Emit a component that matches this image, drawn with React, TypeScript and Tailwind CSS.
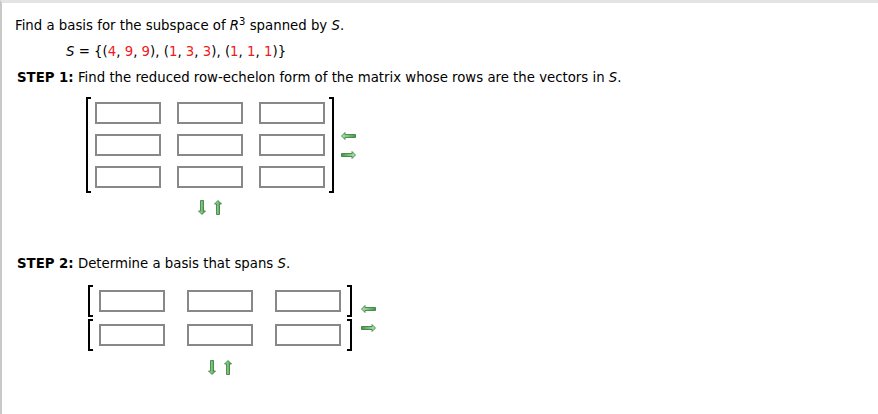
import React from "react";

function ArrowH({ dir }: { dir: "left" | "right" }) {
  const id = `gh-${dir}`;
  return (
    <svg width="15" height="8" viewBox="0 0 15 8" className="block">
      <defs>
        <linearGradient id={id} x1={dir === "left" ? "0" : "1"} y1="0" x2={dir === "left" ? "1" : "0"} y2="0">
          <stop offset="0" stopColor="#b4e2b0" />
          <stop offset="1" stopColor="#3f9a45" />
        </linearGradient>
      </defs>
      <polygon
        points={dir === "left" ? "0.5,4 4,0.5 4,2.5 14.5,2.5 14.5,5.5 4,5.5 4,7.5" : "14.5,4 11,0.5 11,2.5 0.5,2.5 0.5,5.5 11,5.5 11,7.5"}
        fill={`url(#${id})`}
        stroke="#2f7a34"
        strokeWidth="0.8"
      />
    </svg>
  );
}

function ArrowV({ dir }: { dir: "up" | "down" }) {
  const id = `gv-${dir}`;
  return (
    <svg width="8" height="15" viewBox="0 0 8 15" className="block">
      <defs>
        <linearGradient id={id} x1="0" y1="0" x2="1" y2="0">
          <stop offset="0" stopColor="#b4e2b0" />
          <stop offset="1" stopColor="#3f9a45" />
        </linearGradient>
      </defs>
      <polygon
        points={dir === "down" ? "4,14.5 0.5,11 2.5,11 2.5,0.5 5.5,0.5 5.5,11 7.5,11" : "4,0.5 0.5,4 2.5,4 2.5,14.5 5.5,14.5 5.5,4 7.5,4"}
        fill={`url(#${id})`}
        stroke="#2f7a34"
        strokeWidth="0.8"
      />
    </svg>
  );
}

function Box() {
  return <input type="text" className="block w-[66px] h-[22px] border-2 border-[#888888] bg-white outline-none" />;
}

function SideArrows() {
  return (
    <div className="flex flex-col gap-[11px]">
      <ArrowH dir="left" />
      <ArrowH dir="right" />
    </div>
  );
}

function BottomArrows() {
  return (
    <div className="flex gap-[8px]">
      <ArrowV dir="down" />
      <ArrowV dir="up" />
    </div>
  );
}

const red = "text-[#f01818]";

export default function App() {
  return (
    <div
      className="min-h-[414px] bg-white border-t-[3px] border-t-[#e4e4e4] border-l-2 border-l-[#c8c8c8] pl-[13px] pt-[15px] text-[13.3px] leading-[16px] text-black"
      style={{ fontFamily: '"DejaVu Sans", Verdana, sans-serif' }}
    >
      <div>
        Find a basis for the subspace of <i>R</i>
        <sup className="text-[10px]">3</sup> spanned by <i>S</i>.
      </div>
      <div className="mt-[10px] ml-[51px]">
        <i>S</i> = {"{"}(<span className={red}>4</span>, <span className={red}>9</span>, <span className={red}>9</span>), (
        <span className={red}>1</span>, <span className={red}>3</span>, <span className={red}>3</span>), (
        <span className={red}>1</span>, <span className={red}>1</span>, <span className={red}>1</span>){"}"}
      </div>
      <div className="mt-[10px] ml-[2px]">
        <b>STEP 1:</b> Find the reduced row-echelon form of the matrix whose rows are the vectors in <i>S</i>.
      </div>

      <div className="inline-grid grid-cols-[auto_auto] items-center gap-x-[7px] ml-[71px] mt-[11px]">
        <div className="flex">
          <div className="w-[5px] border-l-2 border-y-2 border-black" />
          <div className="grid grid-cols-3 gap-x-[16px] gap-y-[10px] py-[5px] mx-[4px]">
            {Array.from({ length: 9 }).map((_, i) => (
              <Box key={i} />
            ))}
          </div>
          <div className="w-[5px] border-r-2 border-y-2 border-black" />
        </div>
        <SideArrows />
        <div className="col-start-1 flex justify-center mt-[7px]">
          <BottomArrows />
        </div>
      </div>

      <div className="mt-[41px] ml-[2px]">
        <b>STEP 2:</b> Determine a basis that spans <i>S</i>.
      </div>

      <div className="inline-grid grid-cols-[auto_auto] items-center gap-x-[9px] ml-[73px] mt-[13px]">
        <div className="flex flex-col gap-[2px]">
          {[0, 1].map((r) => (
            <div key={r} className="flex">
              <div className="w-[5px] border-l-2 border-y-2 border-black" />
              <div className="flex gap-x-[22px] py-[5px] mx-[6px]">
                <Box />
                <Box />
                <Box />
              </div>
              <div className="w-[5px] border-r-2 border-y-2 border-black" />
            </div>
          ))}
        </div>
        <SideArrows />
        <div className="col-start-1 flex justify-center mt-[9px]">
          <BottomArrows />
        </div>
      </div>
    </div>
  );
}
